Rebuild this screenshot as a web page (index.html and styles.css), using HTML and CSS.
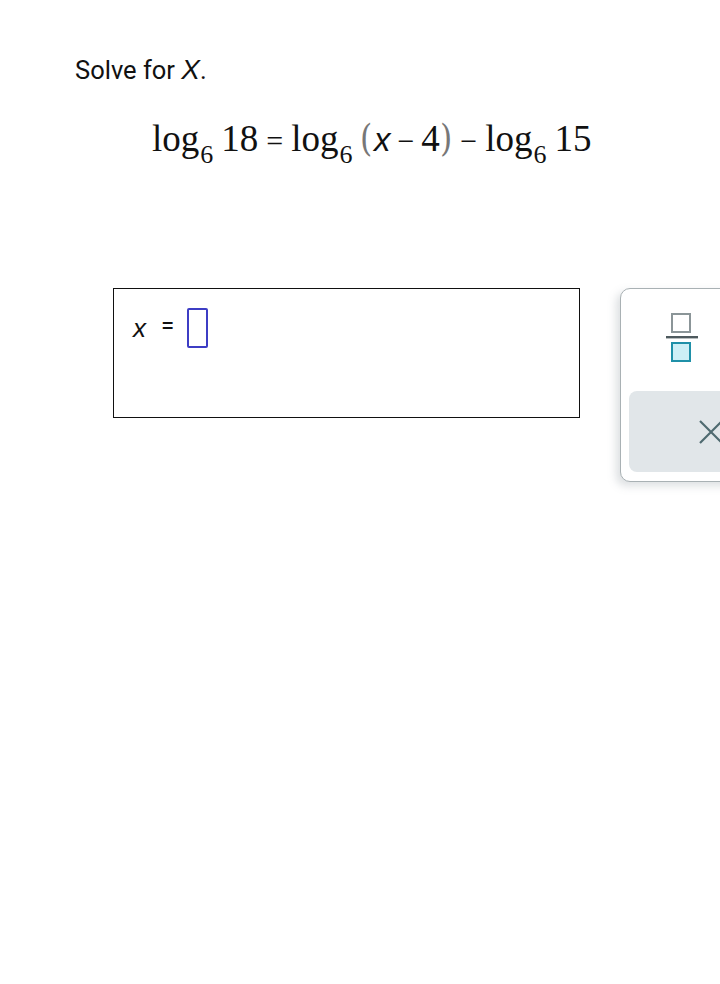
FILE: index.html
```html
<!DOCTYPE html>
<html>
<head>
<meta charset="utf-8">
<link rel="stylesheet" href="styles.css">
</head>
<body>
<div class="page">
  <p class="prompt">Solve for <span class="var">X</span>.</p>
  <div class="equation"><span class="fn">log</span><sub class="base">6</sub><span class="num">18</span><span class="op eq">=</span><span class="fn">log</span><sub class="base">6</sub><span class="paren">(</span><span class="ivar">x</span><span class="op minus inner">−</span><span class="num4">4</span><span class="paren">)</span><span class="op minus">−</span><span class="fn">log</span><sub class="base">6</sub><span class="num">15</span></div>
  <div class="work">
    <div class="answer">
      <span class="ax">x</span>
      <span class="aeq">=</span>
      <span class="slot"></span>
    </div>
    <div class="panel">
      <div class="frac">
        <svg width="34" height="52" viewBox="0 0 34 52">
          <rect x="7" y="1" width="18" height="18" fill="#fff" stroke="#8b9598" stroke-width="2"/>
          <rect x="1" y="23" width="32" height="2.4" fill="#4e5a5e"/>
          <rect x="7" y="30" width="18" height="18" fill="#cdeff6" stroke="#1f90a8" stroke-width="2"/>
        </svg>
      </div>
      <div class="btn">
        <svg class="xicon" width="26" height="26" viewBox="0 0 26 26">
          <path d="M2 2 L24 24 M24 2 L2 24" stroke="#4f6a70" stroke-width="2.2" fill="none"/>
        </svg>
      </div>
    </div>
  </div>
</div>
</body>
</html>
```
FILE: styles.css
```css
html, body {
  margin: 0;
  padding: 0;
  background: #fff;
}
.page {
  width: 720px;
  height: 984px;
  overflow: hidden;
  position: relative;
  font-family: Roboto, "Liberation Sans", sans-serif;
  color: #111;
}
.prompt {
  margin: 0;
  padding: 55px 0 0 75px;
  font-size: 25.5px;
  line-height: 30px;
  height: 30px;
}
.var {
  font-family: "Liberation Sans", Arial, sans-serif;
  font-style: italic;
  font-size: 28px;
}
.equation {
  margin: 32px 0 0 152px;
  height: 44px;
  font-family: "Liberation Serif", "Times New Roman", serif;
  font-size: 37px;
  line-height: 44px;
  white-space: nowrap;
}
.base {
  font-size: 26px;
  vertical-align: -12px;
  line-height: 0;
  margin-left: 1px;
  margin-right: 8px;
}
.op {
  font-size: 30px;
}
.eq { margin: 0 8px; }
.minus { margin: 0 8px; }
.minus.inner { margin: 0 7px; }
.paren {
  color: #777;
  font-size: 37px;
  font-family: "DejaVu Serif", serif;
  display: inline-block;
  transform: scaleX(0.85);
  margin: 0 -1px;
}
.ivar {
  font-family: "Liberation Sans", Arial, sans-serif;
  font-style: italic;
  font-size: 33px;
  margin-left: 1px;
}
.work {
  margin-top: 127px;
  display: flex;
  align-items: flex-start;
}
.answer {
  margin-left: 113px;
  width: 465px;
  height: 128px;
  border: 1px solid #111;
  display: flex;
  align-items: flex-start;
  flex-shrink: 0;
}
.ax {
  font-family: "Liberation Sans", Arial, sans-serif;
  font-style: italic;
  font-size: 26px;
  margin: 26px 0 0 19px;
  line-height: 26px;
}
.aeq {
  font-size: 24px;
  margin: 23px 0 0 15px;
  line-height: 28px;
}
.slot {
  margin: 19px 0 0 13px;
  width: 17px;
  height: 36px;
  border: 2px solid #3d3dc4;
  border-radius: 2px;
}
.panel {
  margin-left: 40px;
  width: 120px;
  height: 192px;
  border: 1px solid #a9b1b4;
  border-radius: 10px;
  box-shadow: -4px 4px 8px rgba(120, 130, 140, 0.25);
  background: #fff;
  display: flex;
  flex-direction: column;
  flex-shrink: 0;
}
.frac {
  padding: 24px 0 0 44px;
  height: 54px;
}
.frac svg { display: block; }
.btn {
  margin: 24px 0 0 8px;
  height: 81px;
  background: #e1e6e9;
  border-radius: 8px;
  position: relative;
}
.xicon {
  position: absolute;
  left: 69px;
  top: 28px;
}
```
